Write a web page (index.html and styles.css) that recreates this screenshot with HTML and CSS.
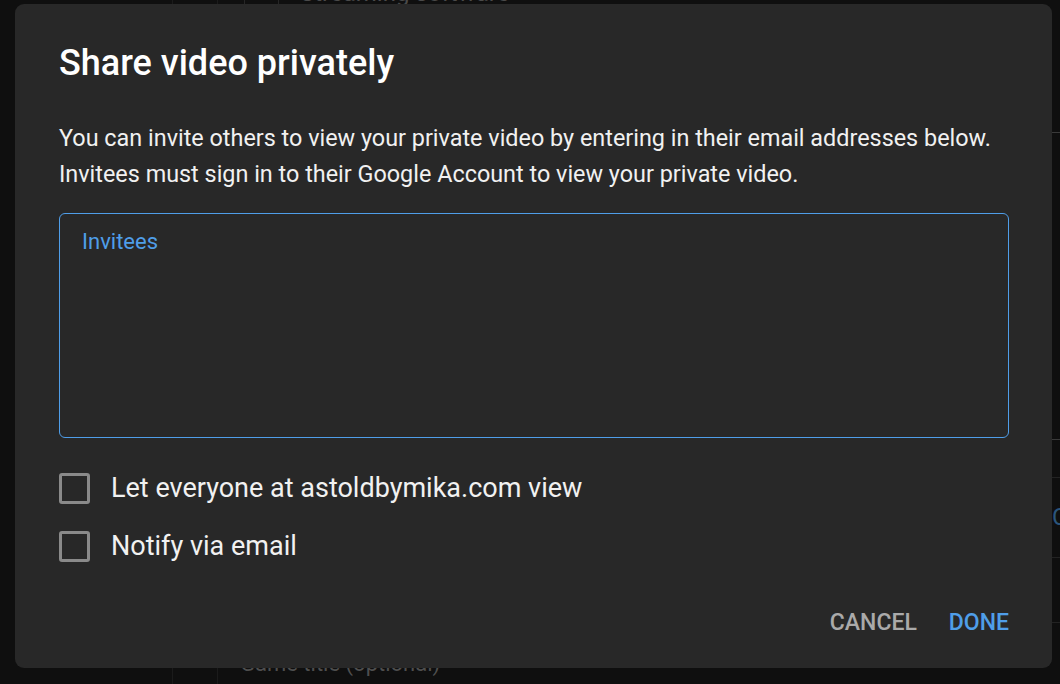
FILE: index.html
```html
<!DOCTYPE html>
<html lang="en">
<head>
<meta charset="utf-8">
<title>Share video privately</title>
<link rel="stylesheet" href="styles.css">
</head>
<body>
<div class="page">
  <aside class="rail"></aside>
  <div class="gutter"></div>
  <main class="content">
    <div class="top-row">
      <span class="thumb"></span>
      <span class="bg-label">Streaming software</span>
    </div>
    <div class="bg-rule rule-a"></div>
    <div class="bg-rule rule-b"></div>
    <div class="bg-rule rule-c dark"></div>
    <div class="bg-action">C</div>
    <div class="bg-rule rule-d dark"></div>
    <div class="bg-rule rule-e dark"></div>
    <div class="bg-bottom">Game title (optional)</div>
  </main>
</div>

<div class="dialog" role="dialog" aria-labelledby="dlg-title">
  <h1 class="dialog-title" id="dlg-title">Share video privately</h1>
  <p class="dialog-desc">You can invite others to view your private video by entering in their email addresses below.<br>Invitees must sign in to their Google Account to view your private video.</p>
  <div class="invitees">
    <span class="invitees-label">Invitees</span>
  </div>
  <label class="check-row">
    <span class="check-box"></span>
    <span class="check-text">Let everyone at astoldbymika.com view</span>
  </label>
  <label class="check-row">
    <span class="check-box"></span>
    <span class="check-text">Notify via email</span>
  </label>
  <div class="actions">
    <button class="btn btn-cancel">CANCEL</button>
    <button class="btn btn-done">DONE</button>
  </div>
</div>
</body>
</html>
```

FILE: styles.css
```css
html, body {
  margin: 0;
  padding: 0;
  background: #0f0f0f;
  font-family: Roboto, "Liberation Sans", Arial, sans-serif;
  overflow: hidden;
}

/* ---------- dimmed page behind the dialog ---------- */
.page {
  display: grid;
  grid-template-columns: 173px 45px 1fr;
  height: 684px;
  width: 1060px;
}
.rail {
  border-right: 1px solid #1b1b1b;
}
.gutter {
  border-right: 1px solid #1b1b1b;
}
.content {
  display: flex;
  flex-direction: column;
  padding-left: 22px;
  overflow: hidden;
}
.top-row {
  display: flex;
  align-items: flex-end;
  height: 24px;
  margin-top: -19px;
  gap: 21px;
  padding-left: 4px;
}
.thumb {
  width: 33px;
  height: 24px;
  border-left: 1px solid #262626;
  border-right: 1px solid #262626;
}
.bg-label {
  color: #4a4a4a;
  font-size: 24px;
  line-height: 24px;
}
.bg-rule {
  border-top: 1px solid #3a3a3a;
  margin-right: -10px;
}
.bg-rule.dark { border-top-color: #232323; }
.rule-a { margin-top: 127px; }
.rule-b { margin-top: 306px; }
.rule-c { margin-top: 37px; }
.bg-action {
  align-self: flex-end;
  margin-right: -2px;
  margin-top: 25px;
  color: #2b557c;
  font-size: 24px;
  line-height: 28px;
  width: 10px;
  overflow: hidden;
  white-space: nowrap;
}
.rule-d { margin-top: 26px; }
.rule-e { margin-top: 64px; }
.bg-bottom {
  margin-top: auto;
  padding-bottom: 7px;
  color: #4e4e4e;
  font-size: 22px;
  line-height: 26px;
}

/* ---------- dialog (overlay) ---------- */
.dialog {
  position: fixed;
  left: 15px;
  top: 4px;
  width: 1037px;
  height: 664px;
  box-sizing: border-box;
  background: #282828;
  border-radius: 9px;
  padding: 39px 43px 0 44px;
  display: flex;
  flex-direction: column;
  color: #f1f1f1;
}
.dialog-title {
  margin: 0;
  font-size: 36px;
  line-height: 40px;
  font-weight: 500;
  color: #ffffff;
  letter-spacing: 0;
}
.dialog-desc {
  margin: 37px 0 0 0;
  font-size: 23.4px;
  line-height: 36px;
  font-weight: 400;
  color: #f1f1f1;
}
.invitees {
  margin-top: 21px;
  height: 225px;
  box-sizing: border-box;
  border: 1px solid #4f9ee9;
  border-radius: 6px;
  padding: 16px 22px;
}
.invitees-label {
  display: block;
  color: #4f9ee9;
  font-size: 22px;
  line-height: 24px;
}
.check-row {
  display: flex;
  align-items: center;
  height: 58px;
  gap: 21px;
}
.check-row:first-of-type { margin-top: 21px; }
.check-box {
  width: 31px;
  height: 31px;
  box-sizing: border-box;
  border: 3px solid #8a8a8a;
  border-radius: 3px;
  flex: none;
}
.check-text {
  font-size: 27px;
  line-height: 32px;
  color: #f1f1f1;
}
.actions {
  display: flex;
  justify-content: flex-end;
  gap: 32px;
  margin-top: 36px;
}
.btn {
  background: none;
  border: 0;
  padding: 0;
  font-family: Roboto, "Liberation Sans", Arial, sans-serif;
  font-size: 23px;
  line-height: 24px;
  font-weight: 500;
  cursor: pointer;
}
.btn-cancel { color: #aaaaaa; }
.btn-done { color: #4f9ee9; }
```
